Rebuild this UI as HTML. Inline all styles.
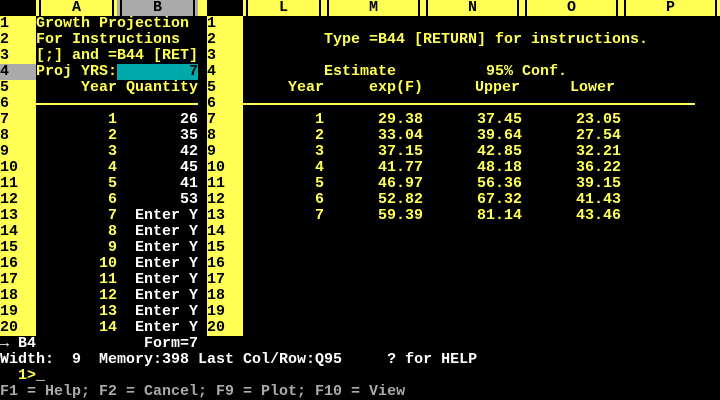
<!DOCTYPE html>
<html><head><meta charset="utf-8"><style>
html,body{margin:0;padding:0;background:#000;width:720px;height:400px;overflow:hidden}
body{position:relative;font-family:"Liberation Mono","DejaVu Sans Mono",monospace;font-size:15px;font-weight:bold;line-height:16px}
.t{position:absolute;white-space:pre;height:16px;color:#ffff55}
.w{color:#fff}.g{color:#aaa}.k{color:#000}
.b{position:absolute}
.h{position:absolute;top:0;height:16px;background:#ffff55;color:#000;text-align:center}
.h:before{content:"";position:absolute;left:3px;top:0;bottom:0;width:2px;background:#000}
.h:after{content:"";position:absolute;right:3px;top:0;bottom:0;width:2px;background:#000}
</style></head><body>
<!-- header -->
<div class="h" style="left:36px;width:81px">A</div>
<div class="h" style="left:117px;width:81px;background:#aaaaaa">B</div>
<div class="b" style="left:198px;top:0;width:9px;height:16px;background:#ffff55"></div>
<div class="h" style="left:243px;width:81px">L</div>
<div class="h" style="left:324px;width:99px">M</div>
<div class="h" style="left:423px;width:99px">N</div>
<div class="h" style="left:522px;width:99px">O</div>
<div class="h" style="left:621px;width:99px">P</div>
<!-- row number bars -->
<div class="b" style="left:0;top:16px;width:36px;height:320px;background:#ffff55"></div>
<div class="b" style="left:0;top:64px;width:36px;height:16px;background:#aaaaaa"></div>
<div class="b" style="left:207px;top:16px;width:36px;height:320px;background:#ffff55"></div>
<!-- cyan cell -->
<div class="b" style="left:117px;top:64px;width:81px;height:16px;background:#00aaaa"></div>
<!-- lines -->
<div class="b" style="left:36px;top:103px;width:162px;height:2px;background:#ffff55"></div>
<div class="b" style="left:243px;top:103px;width:452px;height:2px;background:#ffff55"></div>
<!-- row numbers -->
<div class="t k" style="left:0;top:16px">1</div><div class="t k" style="left:207px;top:16px">1</div>
<div class="t k" style="left:0;top:32px">2</div><div class="t k" style="left:207px;top:32px">2</div>
<div class="t k" style="left:0;top:48px">3</div><div class="t k" style="left:207px;top:48px">3</div>
<div class="t k" style="left:0;top:64px">4</div><div class="t k" style="left:207px;top:64px">4</div>
<div class="t k" style="left:0;top:80px">5</div><div class="t k" style="left:207px;top:80px">5</div>
<div class="t k" style="left:0;top:96px">6</div><div class="t k" style="left:207px;top:96px">6</div>
<div class="t k" style="left:0;top:112px">7</div><div class="t k" style="left:207px;top:112px">7</div>
<div class="t k" style="left:0;top:128px">8</div><div class="t k" style="left:207px;top:128px">8</div>
<div class="t k" style="left:0;top:144px">9</div><div class="t k" style="left:207px;top:144px">9</div>
<div class="t k" style="left:0;top:160px">10</div><div class="t k" style="left:207px;top:160px">10</div>
<div class="t k" style="left:0;top:176px">11</div><div class="t k" style="left:207px;top:176px">11</div>
<div class="t k" style="left:0;top:192px">12</div><div class="t k" style="left:207px;top:192px">12</div>
<div class="t k" style="left:0;top:208px">13</div><div class="t k" style="left:207px;top:208px">13</div>
<div class="t k" style="left:0;top:224px">14</div><div class="t k" style="left:207px;top:224px">14</div>
<div class="t k" style="left:0;top:240px">15</div><div class="t k" style="left:207px;top:240px">15</div>
<div class="t k" style="left:0;top:256px">16</div><div class="t k" style="left:207px;top:256px">16</div>
<div class="t k" style="left:0;top:272px">17</div><div class="t k" style="left:207px;top:272px">17</div>
<div class="t k" style="left:0;top:288px">18</div><div class="t k" style="left:207px;top:288px">18</div>
<div class="t k" style="left:0;top:304px">19</div><div class="t k" style="left:207px;top:304px">19</div>
<div class="t k" style="left:0;top:320px">20</div><div class="t k" style="left:207px;top:320px">20</div>
<!-- left window -->
<div class="t" style="left:36px;top:16px">Growth Projection</div>
<div class="t" style="left:36px;top:32px">For Instructions</div>
<div class="t" style="left:36px;top:48px">[;] and =B44 [RET]</div>
<div class="t" style="left:36px;top:64px">Proj YRS:</div>
<div class="t k" style="left:189px;top:64px">7</div>
<div class="t" style="left:81px;top:80px">Year Quantity</div>
<div class="t" style="left:36px;top:112px;width:81px;text-align:right">1<br>2<br>3<br>4<br>5<br>6<br>7<br>8<br>9<br>10<br>11<br>12<br>13<br>14</div>
<div class="t w" style="left:117px;top:112px;width:81px;text-align:right">26<br>35<br>42<br>45<br>41<br>53<br>Enter Y<br>Enter Y<br>Enter Y<br>Enter Y<br>Enter Y<br>Enter Y<br>Enter Y<br>Enter Y</div>
<!-- right window -->
<div class="t" style="left:324px;top:32px">Type =B44 [RETURN] for instructions.</div>
<div class="t" style="left:324px;top:64px">Estimate</div>
<div class="t" style="left:486px;top:64px">95% Conf.</div>
<div class="t" style="left:288px;top:80px">Year</div>
<div class="t" style="left:369px;top:80px">exp(F)</div>
<div class="t" style="left:475px;top:80px">Upper</div>
<div class="t" style="left:570px;top:80px">Lower</div>
<div class="t" style="left:315px;top:112px">1<br>2<br>3<br>4<br>5<br>6<br>7</div>
<div class="t" style="left:378px;top:112px">29.38<br>33.04<br>37.15<br>41.77<br>46.97<br>52.82<br>59.39</div>
<div class="t" style="left:477px;top:112px">37.45<br>39.64<br>42.85<br>48.18<br>56.36<br>67.32<br>81.14</div>
<div class="t" style="left:576px;top:112px">23.05<br>27.54<br>32.21<br>36.22<br>39.15<br>41.43<br>43.46</div>
<!-- status -->
<div class="t w" style="left:0;top:336px">→ B4</div>
<div class="t w" style="left:144px;top:336px">Form=7</div>
<div class="t w" style="left:0;top:352px">Width:  9  Memory:398 Last Col/Row:Q95     ? for HELP</div>
<div class="t" style="left:18px;top:368px">1&gt;</div>
<div class="t w" style="left:36px;top:368px">_</div>
<div class="t g" style="left:0;top:384px">F1 = Help; F2 = Cancel; F9 = Plot; F10 = View</div>
</body></html>
